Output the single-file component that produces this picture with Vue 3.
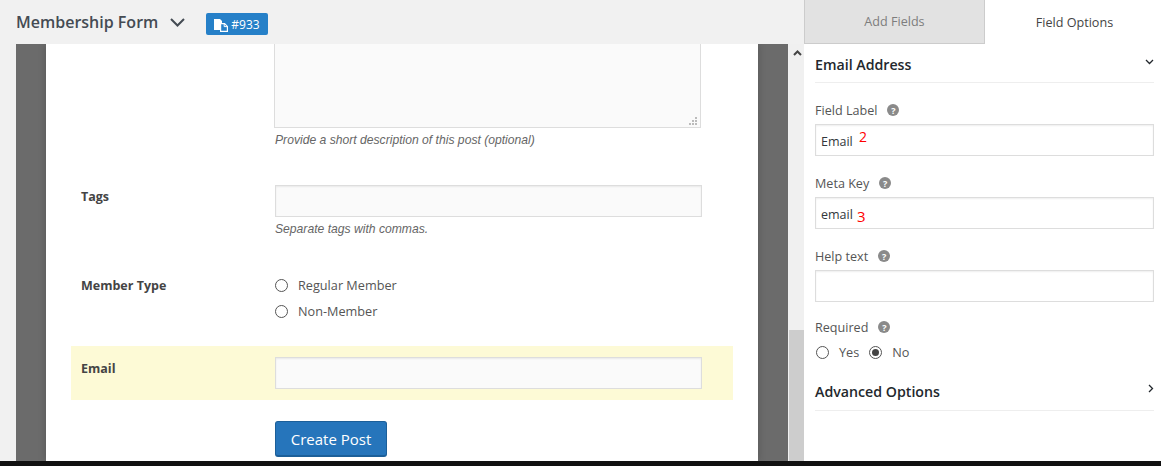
<template>
  <div class="page">
    <div class="workspace">
      <section class="editor">
        <header class="form-bar">
          <h1 class="form-title">Membership Form</h1>
          <svg class="title-caret" width="15" height="9" viewBox="0 0 15 9" fill="none" stroke="#444b53" stroke-width="2">
            <polyline points="1,1 7.500,7.500 14,1" />
          </svg>
          <span class="form-id">
            <svg width="14" height="15" viewBox="0 0 14 15">
              <path d="M0 2h6l2 2v2H6v7H0z" fill="#fff" />
              <path d="M6.600 6.600h4l2.800 2.800v5H6.600z" fill="#2680c8" stroke="#fff" stroke-width="1.200" />
              <path d="M10.200 6.600v3h3" fill="none" stroke="#fff" />
            </svg>
            #933
          </span>
        </header>
        <div class="stage">
          <div class="frame">
            <div class="canvas">
              <div class="form-row">
                <div></div>
                <div>
                  <div class="textarea-box">
                    <svg class="grip" width="9" height="9" viewBox="0 0 9 9" fill="#bbb">
                      <rect x="6" y="0" width="2" height="2" />
                      <rect x="3" y="3" width="2" height="2" />
                      <rect x="6" y="3" width="2" height="2" />
                      <rect x="0" y="6" width="2" height="2" />
                      <rect x="3" y="6" width="2" height="2" />
                      <rect x="6" y="6" width="2" height="2" />
                    </svg>
                  </div>
                  <p class="hint">Provide a short description of this post (optional)</p>
                </div>
              </div>
              <div class="form-row tags-row">
                <label class="row-label">Tags</label>
                <div>
                  <div class="text-box"></div>
                  <p class="hint">Separate tags with commas.</p>
                </div>
              </div>
              <div class="form-row type-row">
                <label class="row-label">Member Type</label>
                <div class="radio-stack">
                  <label v-for="opt in memberTypes" :key="opt" class="radio-line">
                    <span class="radio"></span>
                    {{ opt }}
                  </label>
                </div>
              </div>
              <div class="form-row email-row">
                <label class="row-label">Email</label>
                <div class="text-box"></div>
              </div>
              <div class="form-row submit-row">
                <div></div>
                <div><button class="create-btn">Create Post</button></div>
              </div>
            </div>
          </div>
          <div class="scrollbar">
            <svg class="scroll-up" width="9" height="6" viewBox="0 0 9 6" fill="none" stroke="#444" stroke-width="2">
              <polyline points="1,5 4.500,1.500 8,5" />
            </svg>
            <div class="scroll-thumb"></div>
          </div>
        </div>
      </section>

      <aside class="sidebar">
        <nav class="tabs">
          <div class="tab">Add Fields</div>
          <div class="tab active">Field Options</div>
        </nav>
        <div class="options">
          <div class="section-head">
            <h2>Email Address</h2>
            <svg class="head-caret" width="9" height="6" viewBox="0 0 9 6" fill="none" stroke="#23282d" stroke-width="1.300">
              <polyline points="1,1 4.500,4.500 8,1" />
            </svg>
          </div>

          <div v-for="field in fields" :key="field.label" class="option">
            <div class="option-label">
              {{ field.label }}
              <span class="help-icon">?</span>
            </div>
            <div class="input-wrap">
              <input class="option-input" type="text" :value="field.value" />
              <span v-if="field.note" class="note" :class="field.noteClass">{{ field.note }}</span>
            </div>
          </div>

          <div class="option-label required-label">
            Required
            <span class="help-icon">?</span>
          </div>
          <div class="required-radios">
            <label class="radio-line"><span class="radio"></span>Yes</label>
            <label class="radio-line"><span class="radio checked"></span>No</label>
          </div>

          <div class="section-head advanced">
            <h2>Advanced Options</h2>
            <svg class="head-caret" width="6" height="9" viewBox="0 0 6 9" fill="none" stroke="#23282d" stroke-width="1.300">
              <polyline points="1,1 4.500,4.500 1,8" />
            </svg>
          </div>
        </div>
      </aside>
    </div>
    <div class="bottom-strip"></div>
  </div>
</template>

<script setup>
const memberTypes = ['Regular Member', 'Non-Member']

const fields = [
  { label: 'Field Label', value: 'Email', note: '2', noteClass: 'note-two' },
  { label: 'Meta Key', value: 'email', note: '3', noteClass: 'note-three' },
  { label: 'Help text', value: '' }
]
</script>

<style>
html,
body {
  margin: 0;
  background: #fff;
}
</style>

<style scoped>
.page {
  display: flex;
  flex-direction: column;
  width: 1161px;
  height: 466px;
  overflow: hidden;
  font-family: "Open Sans", "Liberation Sans", sans-serif;
  color: #444;
}

.workspace {
  display: flex;
  height: 461px;
}

.bottom-strip {
  height: 5px;
  background: #111;
}

.editor {
  display: flex;
  flex-direction: column;
  flex: none;
  width: 804px;
  background: #f1f1f1;
}

.form-bar {
  display: flex;
  align-items: center;
  height: 44px;
  padding-left: 16px;
  flex: none;
  box-sizing: border-box;
}

.form-title {
  margin: 0;
  font-size: 16px;
  font-weight: 600;
  color: #444b53;
}

.title-caret {
  margin-left: 12px;
  margin-top: 1px;
}

.form-id {
  display: flex;
  align-items: center;
  gap: 3px;
  height: 22px;
  width: 62px;
  margin-left: 21px;
  margin-top: 4px;
  padding-left: 8px;
  box-sizing: border-box;
  background: #2680c8;
  border-radius: 2px;
  color: #fff;
  font-size: 12px;
}

.stage {
  display: flex;
  flex: 1;
  min-height: 0;
  padding-left: 16px;
}

.frame {
  flex: none;
  padding: 0 30px;
  background: #6b6b6b;
  overflow: hidden;
}

.canvas {
  width: 687px;
  height: 100%;
  padding-left: 25px;
  background: #fff;
  box-shadow: 0 0 8px rgba(0, 0, 0, 0.2);
}

.form-row {
  display: grid;
  grid-template-columns: 194px 427px;
  width: 662px;
  box-sizing: border-box;
  padding-left: 10px;
}

.row-label {
  font-size: 12.500px;
  font-weight: 700;
  color: #444;
  line-height: 17px;
}

.textarea-box {
  position: relative;
  width: 427px;
  height: 84px;
  margin-left: -1px;
  box-sizing: border-box;
  border: 1px solid #ddd;
  border-top: none;
  background: #fafafa;
}

.grip {
  position: absolute;
  right: 2px;
  bottom: 1px;
}

.hint {
  margin: 4px 0 0;
  font-family: "Liberation Sans", Arial, sans-serif;
  font-size: 12.150px;
  font-style: italic;
  line-height: 16px;
  color: #666;
}

.tags-row {
  margin-top: 37px;
}

.tags-row .row-label {
  padding-top: 3px;
}

.text-box {
  height: 32px;
  box-sizing: border-box;
  border: 1px solid #ddd;
  box-shadow: inset 0 1px 2px rgba(0, 0, 0, 0.07);
  background: #fafafa;
}

.type-row {
  margin-top: 39px;
}

.type-row .row-label {
  padding-top: 1px;
}

.radio-stack {
  display: flex;
  flex-direction: column;
  gap: 8px;
}

.radio-line {
  display: flex;
  align-items: center;
  height: 18px;
  font-size: 12.700px;
  color: #555;
}

.radio {
  width: 11px;
  height: 11px;
  margin-right: 10px;
  border: 1px solid #555;
  border-radius: 50%;
  background: #fff;
  position: relative;
  flex: none;
}

.radio.checked::after {
  content: "";
  position: absolute;
  inset: 2px;
  border-radius: 50%;
  background: #444;
}

.email-row {
  margin-top: 26px;
  padding-top: 11px;
  height: 54px;
  background: #fdfad6;
}

.email-row .row-label {
  padding-top: 3px;
}

.submit-row {
  margin-top: 21px;
}

.create-btn {
  display: block;
  width: 112px;
  height: 36px;
  padding: 0;
  border: 1px solid #1c5f99;
  border-bottom-width: 2px;
  border-radius: 3px;
  background: #2675bb;
  color: #fff;
  font-family: inherit;
  font-size: 15px;
}

.scrollbar {
  position: relative;
  flex: none;
  width: 15px;
  margin-left: 1px;
  background: #f0f0f0;
}

.scroll-up {
  position: absolute;
  left: 4px;
  top: 6px;
}

.scroll-thumb {
  position: absolute;
  left: 0;
  right: 0;
  top: 286px;
  bottom: 0;
  background: #cdcdcd;
}

.sidebar {
  flex: none;
  width: 357px;
  min-width: 0;
  display: flex;
  flex-direction: column;
  background: #fff;
}

.tabs {
  display: flex;
  height: 44px;
  flex: none;
}

.tab {
  display: flex;
  align-items: center;
  justify-content: center;
  width: 181px;
  box-sizing: border-box;
  border: 1px solid #ccc;
  border-top: none;
  background: #e2e2e2;
  font-size: 12.600px;
  color: #7d7d7d;
}

.tab.active {
  flex: 1;
  padding-left: 3px;
  border: none;
  background: #fff;
  color: #444;
}

.options {
  min-width: 0;
  padding: 0 7px 0 11px;
}

.section-head {
  display: flex;
  align-items: center;
  justify-content: space-between;
  height: 36px;
  padding-top: 2px;
  border-bottom: 1px solid #eee;
}

.section-head h2 {
  margin: 0;
  font-size: 14.200px;
  font-weight: 600;
  color: #23282d;
}

.head-caret {
  margin-top: -5px;
}

.option {
  margin-bottom: 18px;
}

.section-head + .option {
  margin-top: 18px;
}

.option-label {
  display: flex;
  align-items: center;
  height: 18px;
  font-size: 12.600px;
  color: #555;
}

.help-icon {
  display: inline-flex;
  align-items: center;
  justify-content: center;
  width: 12px;
  height: 12px;
  margin-left: 10px;
  border-radius: 50%;
  background: #8a8a8a;
  color: #fff;
  font-size: 9px;
  font-weight: 700;
  line-height: 1;
}

.input-wrap {
  position: relative;
  margin-top: 5px;
}

.option-input {
  display: block;
  width: 100%;
  min-width: 0;
  height: 32px;
  box-sizing: border-box;
  padding: 2px 5px 0;
  border: 1px solid #ddd;
  box-shadow: inset 0 1px 2px rgba(0, 0, 0, 0.07);
  background: #fff;
  font-family: inherit;
  font-size: 12.500px;
  color: #32373c;
}

.note {
  position: absolute;
  color: #f00;
  line-height: 16px;
}

.note-two {
  left: 44px;
  top: 5px;
  font-size: 14px;
}

.note-three {
  left: 42px;
  top: 11px;
  font-size: 15px;
}

.required-label {
  margin-top: -2px;
}

.required-radios {
  display: flex;
  gap: 10px;
  margin-top: 7px;
  padding-left: 1px;
}

.advanced {
  margin-top: 11px;
  height: 38px;
  padding-top: 0;
}
</style>
